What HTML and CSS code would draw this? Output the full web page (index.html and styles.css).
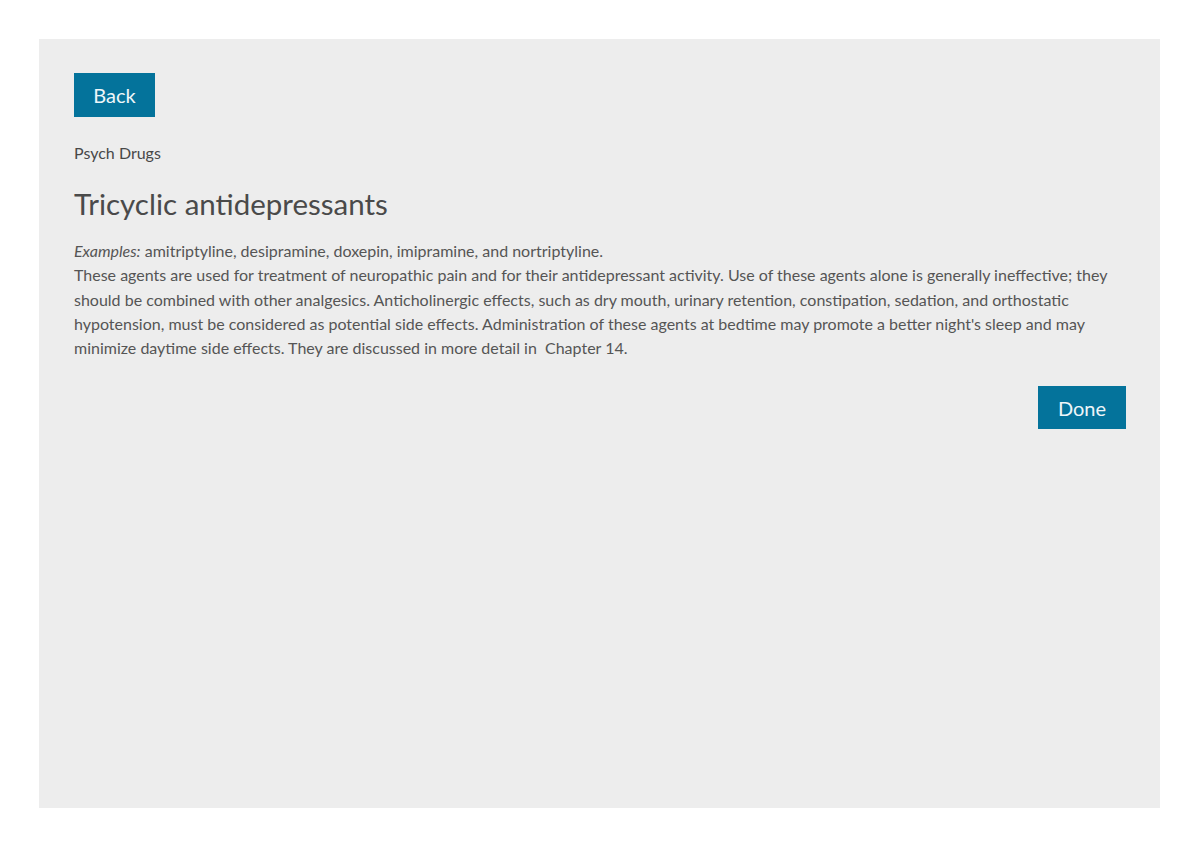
FILE: index.html
```html
<!DOCTYPE html>
<html>
<head>
<meta charset="utf-8">
<link rel="stylesheet" href="styles.css">
</head>
<body>
<div class="page">
  <main class="panel">
    <div class="top"><button class="btn">Back</button></div>
    <p class="crumb">Psych Drugs</p>
    <h1 class="title">Tricyclic antidepressants</h1>
    <div class="body">
      <p><em>Examples:</em> amitriptyline, desipramine, doxepin, imipramine, and nortriptyline.</p>
      <p>These agents are used for treatment of neuropathic pain and for their antidepressant activity. Use of these agents alone is generally ineffective; they should be combined with other analgesics. Anticholinergic effects, such as dry mouth, urinary retention, constipation, sedation, and orthostatic hypotension, must be considered as potential side effects. Administration of these agents at bedtime may promote a better night's sleep and may minimize daytime side effects. They are discussed in more detail in &nbsp;Chapter 14.</p>
    </div>
    <div class="actions"><button class="btn btn-done">Done</button></div>
  </main>
</div>
</body>
</html>
```
FILE: styles.css
```css
html, body { margin: 0; padding: 0; background: #ffffff; }
body { font-family: Lato, "Open Sans", sans-serif; color: #505050; }
.page { padding: 39px 40px 40px 39px; }
.panel {
  background: #ededed;
  height: 769px;
  box-sizing: border-box;
  padding: 34px 34px 34px 35px;
  display: flex;
  flex-direction: column;
}
.btn {
  background: #04739b;
  color: #eef6f9;
  border: 0;
  font-family: Lato, "Open Sans", sans-serif;
  font-size: 20px;
  padding: 0;
  height: 44px;
  width: 81px;
  cursor: pointer;
}
.top { display: flex; }
.crumb { margin: 26px 0 0; font-size: 16px; line-height: 20px; color: #484848; }
.title { margin: 23px 0 0; font-size: 29.5px; font-weight: 400; line-height: 36px; color: #4a4a4a; }
.body { margin-top: 17px; font-size: 16px; line-height: 24.3px; color: #555; }
.body p { margin: 0; }
.actions { display: flex; justify-content: flex-end; margin-top: 26px; }
.btn-done { width: 88px; height: 43px; }
```
